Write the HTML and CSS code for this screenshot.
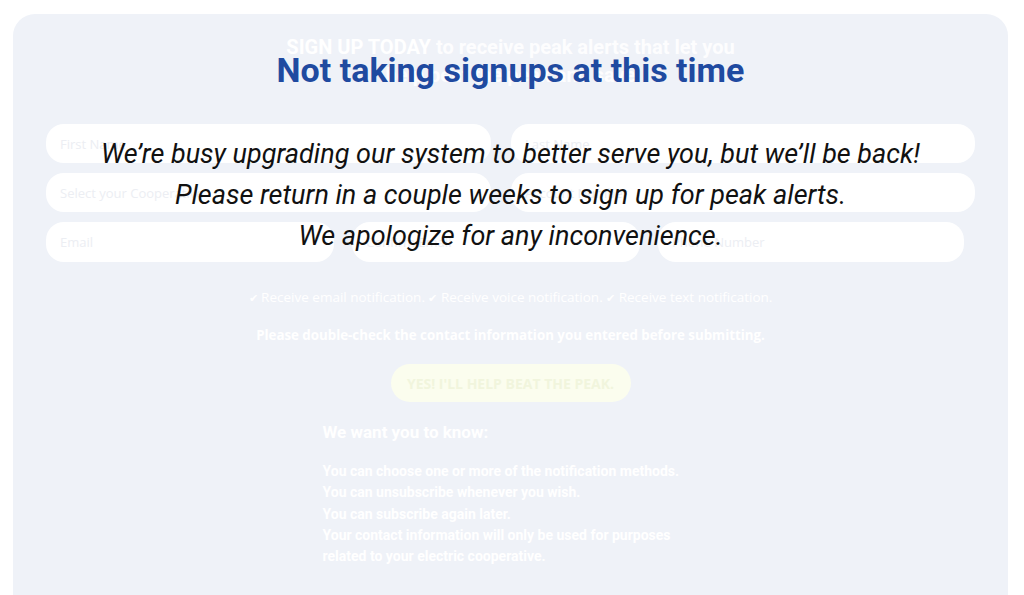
FILE: index.html
```html
<!DOCTYPE html>
<html lang="en">
<head>
<meta charset="utf-8">
<title>Peak Alerts Signup</title>
<link rel="stylesheet" href="styles.css">
</head>
<body>
<div class="page">
  <section class="card">
    <div class="form">
      <h2 class="form-title">SIGN UP TODAY <span class="light">to receive peak alerts that let you</span><br><span class="light">help beat the peak and save</span></h2>
      <div class="row two">
        <div class="input">First Name</div>
        <div class="input">Last Name</div>
      </div>
      <div class="row two">
        <div class="input">Select your Cooperative</div>
        <div class="input">Account Number</div>
      </div>
      <div class="row three">
        <div class="input">Email</div>
        <div class="input">Confirm Email</div>
        <div class="input">Phone Number</div>
      </div>
      <p class="checks"><span class="tick">✔</span> Receive email notification. <span class="tick">✔</span> Receive voice notification. <span class="tick">✔</span> Receive text notification.</p>
      <p class="note">Please double-check the contact information you entered before submitting.</p>
      <div class="btn-wrap"><div class="btn">YES! I'LL HELP BEAT THE PEAK.</div></div>
      <div class="know">
        <h3>We want you to know:</h3>
        <ul>
          <li>You can choose one or more of the notification methods.</li>
          <li>You can unsubscribe whenever you wish.</li>
          <li>You can subscribe again later.</li>
          <li>Your contact information will only be used for purposes related to your electric cooperative.</li>
        </ul>
      </div>
    </div>
    <div class="overlay">
      <h1 class="closed-title">Not taking signups at this time</h1>
      <p class="closed-msg">We’re busy upgrading our system to better serve you, but we’ll be back!<br>Please return in a couple weeks to sign up for peak alerts.<br>We apologize for any inconvenience.</p>
    </div>
  </section>
</div>
</body>
</html>
```

FILE: styles.css
```css
html, body {
  margin: 0;
  padding: 0;
  background: #ffffff;
}
body {
  font-family: Roboto, "Liberation Sans", sans-serif;
}
.page {
  padding: 14px 16px 0 13px;
  height: 595px;
  box-sizing: border-box;
  overflow: hidden;
}
.card {
  position: relative;
  background: #eff2f8;
  border-radius: 22px 22px 0 0;
  height: 620px;
  padding: 19px 33px 0 33px;
  box-sizing: border-box;
}
.form-title {
  margin: 0 0 35px;
  text-align: center;
  font-family: Roboto, sans-serif;
  font-weight: 700;
  font-size: 20px;
  line-height: 28px;
  color: #ffffff;
}
.form-title .light {
  color: rgba(255,255,255,0.9);
}
.row {
  display: grid;
  gap: 20px;
  margin-bottom: 10px;
}
.row.two {
  grid-template-columns: 445px 464px;
}
.row.three {
  grid-template-columns: 288px 288px 306px;
  gap: 18px;
  margin-top: 0;
}
.input {
  height: 39px;
  background: #ffffff;
  border-radius: 18px;
  display: flex;
  align-items: center;
  padding: 0 14px;
  font-family: "Open Sans", sans-serif;
  font-size: 13px;
  color: #eceef3;
}
.row.three .input { height: 40px; }
.checks {
  margin: 26px 0 0;
  text-align: center;
  font-family: "Open Sans", sans-serif;
  font-size: 13.5px;
  color: #ffffff;
}
.tick { font-size: 11px; }
.note {
  margin: 20px 0 0;
  text-align: center;
  font-family: "Open Sans", sans-serif;
  font-weight: 700;
  font-size: 13.3px;
  color: #ffffff;
}
.btn-wrap {
  display: flex;
  justify-content: center;
  margin-top: 20px;
}
.btn {
  width: 240px;
  height: 38px;
  border-radius: 19px;
  background: #fbfdee;
  display: flex;
  align-items: center;
  justify-content: center;
  font-family: "Open Sans", sans-serif;
  font-weight: 700;
  font-size: 14px;
  color: #f1f5dd;
}
.know {
  width: 376px;
  margin: 19px auto 0;
  color: #ffffff;
}
.know h3 {
  margin: 0 0 18px;
  font-size: 17px;
  font-weight: 700;
  line-height: 22px;
}
.know ul {
  list-style: none;
  margin: 0;
  padding: 0;
  font-size: 14px;
  font-weight: 700;
  line-height: 21.25px;
}
.overlay {
  position: absolute;
  left: 0;
  right: 0;
  top: 33px;
  text-align: center;
}
.closed-title {
  margin: 0;
  font-family: Roboto, sans-serif;
  font-weight: 700;
  font-size: 34px;
  line-height: 46px;
  color: #1f4aa0;
}
.closed-msg {
  margin: 41px 0 0;
  font-family: Roboto, sans-serif;
  font-style: italic;
  font-size: 27px;
  line-height: 41px;
  color: #111111;
}
```
